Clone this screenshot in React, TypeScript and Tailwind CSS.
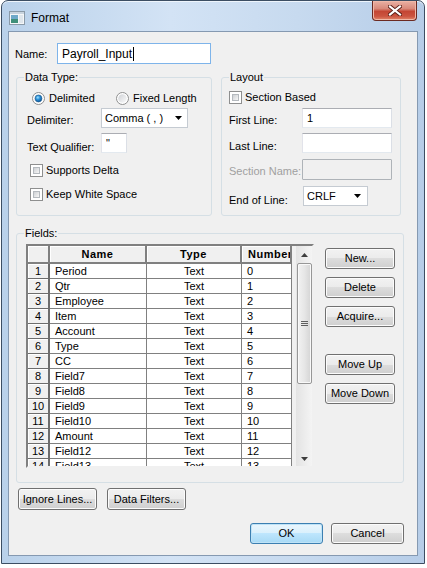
import React from "react";

type FieldRow = { name: string; type: string; num: number };

const fields: FieldRow[] = [
  "Period",
  "Qtr",
  "Employee",
  "Item",
  "Account",
  "Type",
  "CC",
  "Field7",
  "Field8",
  "Field9",
  "Field10",
  "Amount",
  "Field12",
  "Field13",
].map((name, i) => ({ name, type: "Text", num: i }));

function Button({
  label,
  className,
  primary,
}: {
  label: string;
  className: string;
  primary?: boolean;
}) {
  return (
    <button
      className={
        "flex items-center justify-center rounded-[3px] border text-[11px] text-black " +
        (primary
          ? "border-[#3c7fb1] bg-[linear-gradient(#eaf6fd,#d9f0fc_50%,#bee6fd_50%,#a7d9f5)] shadow-[inset_0_0_0_1px_#bfe3f7] "
          : "border-[#707070] bg-[linear-gradient(#f2f2f2,#ebebeb_50%,#dddddd_50%,#cfcfcf)] shadow-[inset_0_0_0_1px_#fcfcfc] ") +
        className
      }
    >
      {label}
    </button>
  );
}

function CheckBox({ label }: { label: string }) {
  return (
    <div className="flex h-[13px] items-center gap-[3px] leading-[13px]">
      <span className="flex h-[13px] w-[13px] border border-[#8e8f8f] bg-white p-[2px]">
        <span className="block h-full w-full border border-[#b4b9be] bg-[linear-gradient(135deg,#cdd0d4,#f7f7f7)]" />
      </span>
      <span>{label}</span>
    </div>
  );
}

function Radio({ checked }: { checked?: boolean }) {
  return (
    <svg width="13" height="13" viewBox="0 0 13 13">
      <defs>
        <linearGradient id={checked ? "rbg1" : "rbg0"} x1="0" y1="0" x2="1" y2="1">
          <stop offset="0" stopColor="#cfd2d6" />
          <stop offset="1" stopColor="#fbfbfb" />
        </linearGradient>
        <radialGradient id="rdot" cx="0.4" cy="0.35" r="0.7">
          <stop offset="0" stopColor="#9fe3ff" />
          <stop offset="0.45" stopColor="#2a8fd8" />
          <stop offset="1" stopColor="#0b4f8e" />
        </radialGradient>
      </defs>
      <circle cx="6.5" cy="6.5" r="6" fill="#fff" stroke="#8e8f8f" />
      <circle cx="6.5" cy="6.5" r="4.3" fill={checked ? "url(#rbg1)" : "url(#rbg0)"} />
      {checked && <circle cx="6.5" cy="6.5" r="3.4" fill="url(#rdot)" stroke="#1a5d94" strokeWidth="0.6" />}
    </svg>
  );
}

function DropArrow() {
  return (
    <svg width="7" height="4" viewBox="0 0 7 4">
      <path d="M0 0h7L3.5 4z" fill="#000" />
    </svg>
  );
}

function Group({
  title,
  className,
  children,
}: {
  title: string;
  className: string;
  children: React.ReactNode;
}) {
  return (
    <fieldset className={"rounded-[3px] border border-[#d5dfe5] " + className}>
      <legend className="ml-[7px] px-[1px] text-[11px] leading-[14px]">{title}</legend>
      {children}
    </fieldset>
  );
}

function FieldsGrid() {
  return (
    <div className="flex h-[224px] w-[288px] overflow-hidden border-2 border-t-[#808080] border-l-[#808080] border-r-[#f0f0f0] border-b-[#f0f0f0] bg-[#f0f0f0]">
      <div className="flex w-[264px] flex-col">
        <div className="flex h-[18px] shrink-0 font-bold tracking-[0.5px]">
          <div className="w-[22px] border-r-2 border-b-2 border-[#808080] shadow-[inset_1px_1px_0_#fff]" />
          <div className="flex w-[97px] items-center justify-center border-r-2 border-b-2 border-[#808080] shadow-[inset_1px_1px_0_#fff]">
            Name
          </div>
          <div className="flex w-[95px] items-center justify-center border-r-2 border-b-2 border-[#808080] shadow-[inset_1px_1px_0_#fff]">
            Type
          </div>
          <div className="flex w-[50px] items-center overflow-hidden whitespace-nowrap border-r-2 border-b-2 border-[#808080] pl-[6px] shadow-[inset_1px_1px_0_#fff]">
            Number
          </div>
        </div>
        {fields.map((f) => (
          <div key={f.num} className="flex h-[15px] shrink-0 leading-[14px]">
            <div className="flex w-[22px] items-center justify-center border-r-2 border-b border-[#6d6d6d] bg-[#f0f0f0] shadow-[inset_1px_1px_0_#fff]">
              {f.num + 1}
            </div>
            <div className="w-[97px] border-r border-b border-[#808080] bg-white pl-[5px]">{f.name}</div>
            <div className="w-[95px] border-r border-b border-[#808080] bg-white text-center">{f.type}</div>
            <div className="w-[50px] border-r border-b border-[#808080] bg-white pl-[5px]">{f.num}</div>
          </div>
        ))}
      </div>
      <div className="ml-[4px] flex w-[16px] flex-col items-center bg-[linear-gradient(90deg,#e3e3e3,#f4f4f4)]">
        <div className="flex h-[17px] items-center justify-center">
          <svg width="7" height="4" viewBox="0 0 7 4">
            <path d="M0 4h7L3.5 0z" fill="#3d3d3d" />
          </svg>
        </div>
        <div className="flex h-[121px] w-[15px] items-center justify-center rounded-[2px] border border-[#979797] bg-[linear-gradient(90deg,#f2f2f2,#e6e6e6_50%,#d4d4d4)] shadow-[inset_0_0_0_1px_#f9f9f9]">
          <svg width="7" height="7" viewBox="0 0 7 7">
            <path d="M0 1.5h7M0 3.5h7M0 5.5h7" stroke="#5e5e5e" strokeWidth="1" />
          </svg>
        </div>
        <div className="flex-1" />
        <div className="flex h-[15px] items-center justify-center">
          <svg width="7" height="4" viewBox="0 0 7 4">
            <path d="M0 0h7L3.5 4z" fill="#3d3d3d" />
          </svg>
        </div>
      </div>
    </div>
  );
}

export default function App() {
  return (
    <div className="h-[568px] w-[427px] bg-white font-['Liberation_Sans',Arial,sans-serif] text-[11px] text-black">
      <div className="ml-[1px] flex h-[564px] w-[424px] flex-col rounded-t-[7px] border border-[#3c4e63] bg-[linear-gradient(90deg,#b9d1ea,#d3e3f5_40%,#c7daef_70%,#b6cde8)] shadow-[inset_0_1px_0_#eef5fc]">
        {/* title bar */}
        <div className="flex h-[30px] shrink-0 items-start">
          <div className="mt-[8px] ml-[7px] flex items-center">
            <svg width="16" height="14" viewBox="0 0 16 14">
              <rect x="0.5" y="0.5" width="15" height="13" fill="#f4f6f8" stroke="#8a9aa8" />
              <rect x="1" y="1" width="14" height="2" fill="#c9d4de" />
              <rect x="2" y="4" width="7" height="8" fill="#3f8f7a" />
              <rect x="2" y="4" width="7" height="4" fill="#6ea9c9" />
              <rect x="10" y="4" width="4" height="8" fill="#dfe6ec" />
            </svg>
            <span className="ml-[6px] text-[12px]">Format</span>
          </div>
          <div className="flex-1" />
          <div className="mr-[7px] flex h-[20px] w-[45px] items-center justify-center rounded-b-[4px] border border-t-0 border-[#6b2a22] bg-[linear-gradient(#eab1a4,#d98a7b_40%,#c44634_55%,#cb5440_80%,#e2866a)] shadow-[inset_0_0_0_1px_#f0b8a8]">
            <svg width="14" height="11" viewBox="0 0 14 11">
              <path d="M2 1.5l10 8M12 1.5l-10 8" stroke="#5a1e16" strokeWidth="4" strokeLinecap="square" />
              <path d="M2 1.5l10 8M12 1.5l-10 8" stroke="#fff" strokeWidth="2.2" strokeLinecap="square" />
            </svg>
          </div>
        </div>

        {/* client area */}
        <div className="mx-[6px] flex h-[525px] shrink-0 flex-col border border-[#8599b1] bg-[#f0f0f0]">
          <div className="mt-[11px] flex h-[21px] items-center">
            <span className="ml-[6px] w-[42px] pt-[2px]">Name:</span>
            <div className="flex h-[21px] w-[154px] items-center border border-[#7eb4ea] bg-white pl-[4px] text-[12px]">
              Payroll_Input<span className="ml-[1px] h-[14px] w-px bg-black" />
            </div>
          </div>

          <div className="mt-[6px] ml-[7px] flex gap-[9px]">
            <Group title="Data Type:" className="h-[146px] w-[196px]">
              <div className="mt-[7px] flex h-[15px] items-center">
                <div className="ml-[15px] flex w-[84px] items-center gap-[4px]">
                  <Radio checked />
                  <span>Delimited</span>
                </div>
                <div className="flex items-center gap-[4px]">
                  <Radio />
                  <span>Fixed Length</span>
                </div>
              </div>
              <div className="mt-[2px] flex h-[20px] items-center">
                <span className="ml-[10px] w-[74px] pt-[4px]">Delimiter:</span>
                <div className="flex h-[20px] w-[87px] items-center justify-between border border-[#c5cbd2] bg-white pr-[5px] pl-[3px]">
                  <span>Comma ( , )</span>
                  <DropArrow />
                </div>
              </div>
              <div className="mt-[5px] flex h-[20px] items-center">
                <span className="ml-[10px] w-[74px] pt-[8px]">Text Qualifier:</span>
                <div className="flex h-[20px] w-[26px] items-center border border-t-[#abadb3] border-r-[#dbdfe6] border-b-[#e3e9ef] border-l-[#e2e3ea] bg-white pl-[4px]">
                  "
                </div>
              </div>
              <div className="mt-[11px] ml-[13px]">
                <CheckBox label="Supports Delta" />
              </div>
              <div className="mt-[11px] ml-[13px]">
                <CheckBox label="Keep White Space" />
              </div>
            </Group>

            <Group title="Layout" className="h-[146px] w-[180px]">
              <div className="mt-[7px] ml-[7px]">
                <CheckBox label="Section Based" />
              </div>
              <div className="mt-[4px] flex h-[20px] items-center">
                <span className="ml-[7px] w-[73px] pt-[4px]">First Line:</span>
                <div className="flex h-[20px] w-[90px] items-center border border-t-[#abadb3] border-r-[#dbdfe6] border-b-[#e3e9ef] border-l-[#e2e3ea] bg-white pl-[4px]">
                  1
                </div>
              </div>
              <div className="mt-[5px] flex h-[20px] items-center">
                <span className="ml-[7px] w-[73px] pt-[6px]">Last Line:</span>
                <div className="h-[20px] w-[90px] border border-t-[#abadb3] border-r-[#dbdfe6] border-b-[#e3e9ef] border-l-[#e2e3ea] bg-white" />
              </div>
              <div className="mt-[6px] flex h-[21px] items-center">
                <span className="ml-[7px] w-[73px] pt-[4px] text-[#a0a0a0]">Section Name:</span>
                <div className="h-[21px] w-[90px] rounded-[1px] border border-[#aeb3b8] bg-[#f0f0f0]" />
              </div>
              <div className="mt-[6px] flex h-[20px] items-center">
                <span className="ml-[7px] w-[74px] pt-[8px]">End of Line:</span>
                <div className="flex h-[20px] w-[65px] items-center justify-between border border-[#c5cbd2] bg-white pr-[6px] pl-[3px]">
                  <span>CRLF</span>
                  <DropArrow />
                </div>
              </div>
            </Group>
          </div>

          <Group title="Fields:" className="mt-[10px] ml-[7px] h-[257px] w-[388px]">
            <div className="flex">
              <div className="mt-[4px] ml-[9px]">
                <FieldsGrid />
              </div>
              <div className="mt-[8px] ml-[11px] flex flex-col">
                <Button label="New..." className="h-[21px] w-[70px]" />
                <Button label="Delete" className="mt-[8px] h-[21px] w-[70px]" />
                <Button label="Acquire..." className="mt-[8px] h-[21px] w-[70px]" />
                <Button label="Move Up" className="mt-[27px] h-[21px] w-[70px]" />
                <Button label="Move Down" className="mt-[8px] h-[21px] w-[70px]" />
              </div>
            </div>
          </Group>

          <div className="mt-[5px] ml-[9px] flex gap-[10px]">
            <Button label="Ignore Lines..." className="h-[22px] w-[79px]" />
            <Button label="Data Filters..." className="h-[22px] w-[79px]" />
          </div>

          <div className="mt-[13px] flex justify-end gap-[8px] pr-[13px]">
            <Button label="OK" primary className="h-[21px] w-[73px]" />
            <Button label="Cancel" className="h-[21px] w-[73px]" />
          </div>
        </div>
      </div>
    </div>
  );
}
